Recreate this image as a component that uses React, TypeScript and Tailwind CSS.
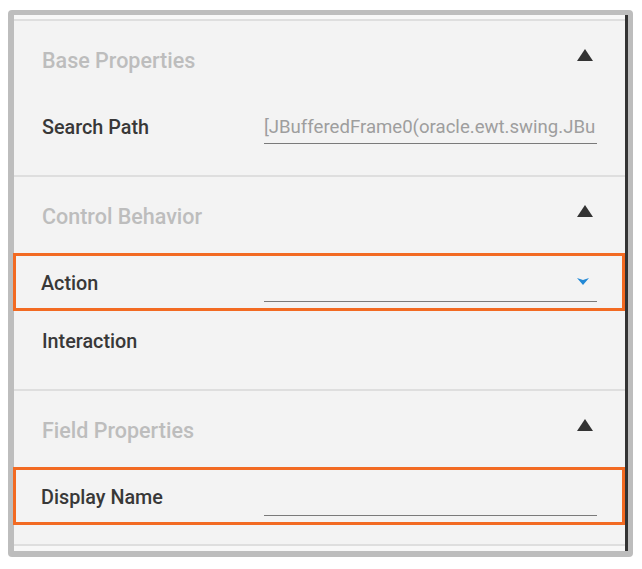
import React from "react";

const font = { fontFamily: "Roboto, 'Noto Sans', sans-serif" };

function Caret() {
  return (
    <svg width="16" height="12" viewBox="0 0 16 12" className="block">
      <polygon points="8,0 16,12 0,12" fill="#333333" />
    </svg>
  );
}

function Chevron() {
  return (
    <svg width="12" height="7" viewBox="0 0 12 7" className="block">
      <polygon points="0,0 6,2 12,0 6,7" fill="#2389d6" />
    </svg>
  );
}

function Header({ title }: { title: string }) {
  return (
    <div className="h-[76px] flex items-center justify-between pl-[28px] pr-[32px]">
      <span className="mt-[4px] text-[21.5px] font-medium text-[#bdbdbd]">{title}</span>
      <span className="-mt-[8px]">
        <Caret />
      </span>
    </div>
  );
}

function Field({
  label,
  value,
  dropdown,
  highlight,
  input = true,
}: {
  label: string;
  value?: string;
  dropdown?: boolean;
  highlight?: boolean;
  input?: boolean;
}) {
  return (
    <div
      className={
        highlight
          ? "h-[58px] flex items-center justify-between border-[3px] border-[#f26a22] pl-[25px] pr-[25px] -ml-[1px]"
          : "h-[58px] flex items-center justify-between pl-[28px] pr-[28px]"
      }
    >
      <span className="mt-[4px] text-[19.8px] font-medium text-[#383838]">{label}</span>
      {input && (
        <div
          className={
            highlight
              ? "w-[333px] h-[28px] mt-[12px] border-b-[1.5px] border-[#7a7a7a] flex items-start justify-between overflow-hidden"
              : "w-[333px] h-[28px] mt-[8px] border-b-[1.5px] border-[#7a7a7a] flex items-start justify-between overflow-hidden"
          }
        >
          <span className="text-[18.6px] leading-[22px] text-[#9e9e9e] whitespace-nowrap">
            {value}
          </span>
          {dropdown && (
            <span className="mt-[4px] mr-[8px]">
              <Chevron />
            </span>
          )}
        </div>
      )}
    </div>
  );
}

export default function App() {
  return (
    <div className="w-[642px] h-[569px] bg-white pt-[10px] pl-[8px]" style={font}>
      <div className="w-[625px] h-[547px] bg-[#bdbdbd] rounded-[4px] pt-[5px] pl-[6px]">
        <div className="w-[614px] h-[536px] bg-[#f3f3f3] border-r-[3px] border-[#333333]">
          <div className="h-[4px] bg-[#f7f7f7]" />
          <div className="border-t-2 border-[#dedede]">
            <Header title="Base Properties" />
            <Field label="Search Path" value="[JBufferedFrame0(oracle.ewt.swing.JBu" />
            <div className="h-[20px]" />
          </div>
          <div className="border-t-2 border-[#dedede]">
            <Header title="Control Behavior" />
            <Field label="Action" dropdown highlight />
            <Field label="Interaction" input={false} />
            <div className="h-[20px]" />
          </div>
          <div className="border-t-2 border-[#dedede]">
            <Header title="Field Properties" />
            <Field label="Display Name" highlight />
            <div className="h-[19px]" />
          </div>
          <div className="border-t-2 border-[#dedede] h-[7px] bg-[#f7f7f7]" />
        </div>
      </div>
    </div>
  );
}
